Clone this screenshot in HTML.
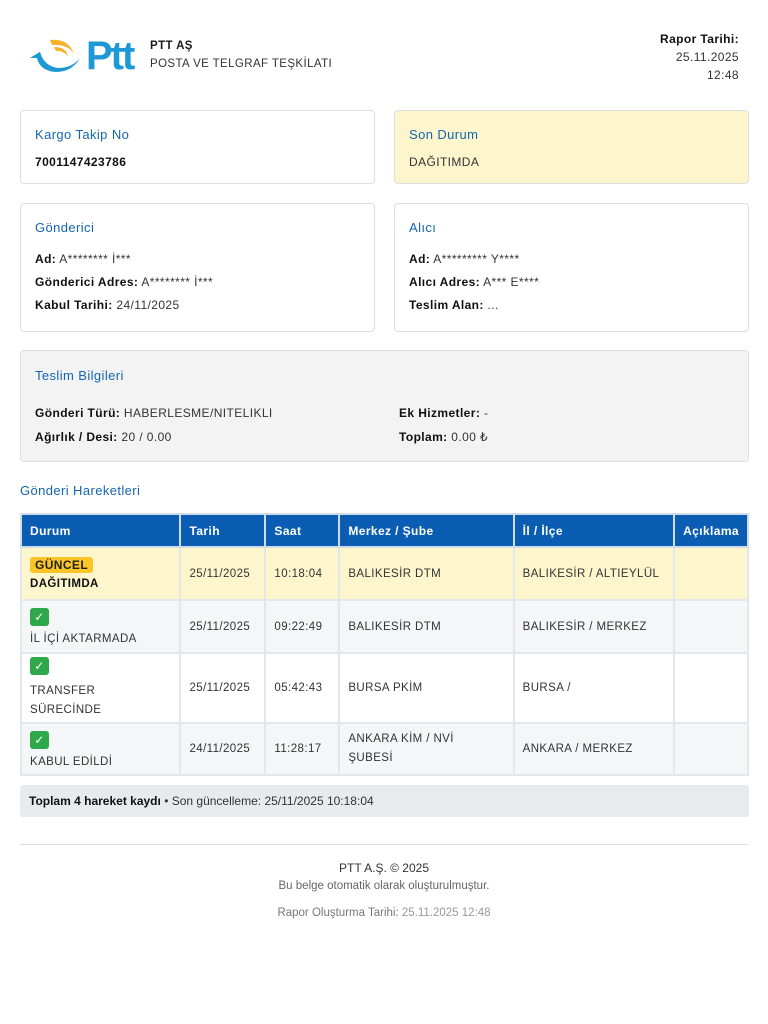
<!DOCTYPE html>
<html><head><meta charset="utf-8"><style>
*{margin:0;padding:0;box-sizing:border-box}
body{width:768px;height:1024px;background:#fff;font-family:"Liberation Sans",sans-serif;color:#1a1a1a;position:relative;overflow:hidden;font-size:12px;letter-spacing:0.4px}
.a{position:absolute}
.card{position:absolute;border:1px solid #dcdfe3;border-radius:4px;background:#fff}
.t{color:#1565b0;font-size:13px}
b{font-weight:bold;color:#111}
.g{color:#333}
table{position:absolute;left:20px;top:513px;width:729px;border-collapse:collapse}
td,th{border:2px solid #e3e6ea;padding:0 8px;font-size:11.5px;text-align:left;vertical-align:middle;color:#333}
th{background:#0a5db3;color:#fff;height:33px;font-weight:bold;font-size:12px;border-color:#d0dbe8}
.chk{display:inline-block;width:19px;height:18px;background:#2ea84a;border-radius:3px;color:#fff;text-align:center;font-size:12px;line-height:18px;margin-bottom:7px}
</style></head><body>
<svg class="a" style="left:28px;top:34px" width="112" height="40" viewBox="0 0 112 40">
<path d="M2 24 L12 18 Q16 32 30 34 Q44 34 52 24 Q44 38 28 38 Q12 37 9 24 Z" fill="#1d9ad6"/>
<path d="M2 24 L12 18 L13 24 Z" fill="#1d9ad6"/>
<path d="M22 6 Q40 4 46 20 Q40 10 24 11 Z" fill="#f5b12a"/>
<path d="M26 13 Q38 13 40 22 Q34 16 28 17 Z" fill="#f5b12a"/>
<text x="58" y="35" font-family="Liberation Sans" font-weight="bold" font-size="40" fill="#1d9ad6" letter-spacing="-2">Ptt</text>
</svg>
<div class="a" style="left:150px;top:40px;font-size:11.5px;font-weight:bold">PTT AŞ</div>
<div class="a" style="left:150px;top:58px;font-size:11.5px;color:#333">POSTA VE TELGRAF TEŞKİLATI</div>
<div class="a" style="right:29px;top:30px;text-align:right;font-size:12px;line-height:18px"><b>Rapor Tarihi:</b><br><span class="g">25.11.2025<br>12:48</span></div>

<div class="card" style="left:20px;top:110px;width:355px;height:74px"><div class="a t" style="left:14px;top:16px">Kargo Takip No</div><div class="a" style="left:14px;top:44px"><b style="font-weight:600">7001147423786</b></div></div>
<div class="card" style="left:394px;top:110px;width:355px;height:74px;background:#fdf5cc"><div class="a t" style="left:14px;top:16px">Son Durum</div><div class="a g" style="left:14px;top:44px">DAĞITIMDA</div></div>

<div class="card" style="left:20px;top:203px;width:355px;height:129px"><div class="a t" style="left:14px;top:16px">Gönderici</div>
<div class="a g" style="left:14px;top:44px;line-height:23px"><b>Ad:</b> A******** İ***<br><b>Gönderici Adres:</b> A******** İ***<br><b>Kabul Tarihi:</b> 24/11/2025</div></div>
<div class="card" style="left:394px;top:203px;width:355px;height:129px"><div class="a t" style="left:14px;top:16px">Alıcı</div>
<div class="a g" style="left:14px;top:44px;line-height:23px"><b>Ad:</b> A********* Y****<br><b>Alıcı Adres:</b> A*** E****<br><b>Teslim Alan:</b> ...</div></div>

<div class="card" style="left:20px;top:350px;width:729px;height:112px;background:#f3f3f3"><div class="a t" style="left:14px;top:17px">Teslim Bilgileri</div>
<div class="a g" style="left:14px;top:50px;line-height:24px"><b>Gönderi Türü:</b> HABERLESME/NITELIKLI<br><b>Ağırlık / Desi:</b> 20 / 0.00</div>
<div class="a g" style="left:378px;top:50px;line-height:24px"><b>Ek Hizmetler:</b> -<br><b>Toplam:</b> 0.00 ₺</div></div>

<div class="a t" style="left:20px;top:483px">Gönderi Hareketleri</div>

<table>
<tr><th style="width:160px">Durum</th><th style="width:85px">Tarih</th><th style="width:74px">Saat</th><th style="width:175px">Merkez / Şube</th><th style="width:161px">İl / İlçe</th><th>Açıklama</th></tr>
<tr style="background:#fdf5cc;height:53px"><td><span style="display:inline-block;background:#fbc527;border-radius:3px;padding:1px 5px;font-weight:bold;color:#222;font-size:12px;margin-bottom:5px">GÜNCEL</span><br><b style="font-size:11.5px">DAĞITIMDA</b></td><td>25/11/2025</td><td>10:18:04</td><td>BALIKESİR DTM</td><td>BALIKESİR / ALTIEYLÜL</td><td></td></tr>
<tr style="background:#f5f6f8;height:53px"><td><span class="chk">✓</span><br>İL İÇİ AKTARMADA</td><td>25/11/2025</td><td>09:22:49</td><td>BALIKESİR DTM</td><td>BALIKESİR / MERKEZ</td><td></td></tr>
<tr style="background:#fff;height:70px"><td><span class="chk">✓</span><br><span style="line-height:19px">TRANSFER<br>SÜRECİNDE</span></td><td>25/11/2025</td><td>05:42:43</td><td>BURSA PKİM</td><td>BURSA /</td><td></td></tr>
<tr style="background:#f5f6f8;height:52px"><td><span class="chk">✓</span><br>KABUL EDİLDİ</td><td>24/11/2025</td><td>11:28:17</td><td style="line-height:19px">ANKARA KİM / NVİ<br>ŞUBESİ</td><td>ANKARA / MERKEZ</td><td></td></tr>
</table>

<div class="a" style="left:20px;top:785px;width:729px;height:32px;background:#e8eaed;border-radius:3px;padding:9px 9px;font-size:12px;letter-spacing:0"><b>Toplam 4 hareket kaydı</b> <span class="g">• Son güncelleme: 25/11/2025 10:18:04</span></div>
<div class="a" style="left:20px;top:844px;width:729px;height:1px;background:#e0e0e0"></div>
<div class="a" style="left:0;width:768px;top:861px;text-align:center;font-size:12px;color:#333;letter-spacing:0">PTT A.Ş. © 2025</div>
<div class="a" style="left:0;width:768px;top:880px;text-align:center;font-size:11.5px;color:#666;letter-spacing:0">Bu belge otomatik olarak oluşturulmuştur.</div>
<div class="a" style="left:0;width:768px;top:907px;text-align:center;font-size:11.5px;color:#888;letter-spacing:0"><span style="color:#777">Rapor Oluşturma Tarihi:</span> <span style="color:#999">25.11.2025 12:48</span></div>
</body></html>
